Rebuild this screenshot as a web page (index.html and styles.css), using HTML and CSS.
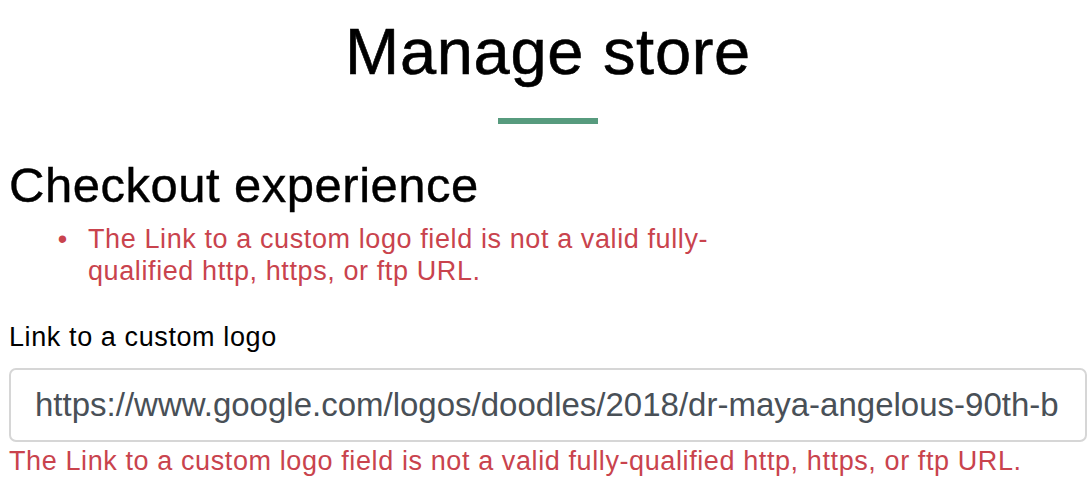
FILE: index.html
```html
<!DOCTYPE html>
<html lang="en">
<head>
<meta charset="utf-8">
<title>Manage store</title>
<link rel="stylesheet" href="styles.css">
</head>
<body>
<main class="page">
  <h1 class="title">Manage store</h1>
  <div class="divider"></div>
  <h2 class="section-title">Checkout experience</h2>
  <ul class="error-list">
    <li>The Link to a custom logo field is not a valid fully-qualified http, https, or ftp URL.</li>
  </ul>
  <form class="form">
    <label class="field-label" for="logo">Link to a custom logo</label>
    <input class="field-input" id="logo" type="text" value="https://www.google.com/logos/doodles/2018/dr-maya-angelous-90th-birthday-4873113640583168-2x.jpg">
    <div class="field-error">The Link to a custom logo field is not a valid fully-qualified http, https, or ftp URL.</div>
  </form>
</main>
</body>
</html>
```

FILE: styles.css
```css
* { box-sizing: border-box; }

html, body {
  margin: 0;
  background: #ffffff;
}

body {
  font-family: "Liberation Sans", Arial, Helvetica, sans-serif;
  font-size: 27px;
  letter-spacing: 0.6px;
  line-height: 1.5;
  color: #000000;
}

.page {
  width: 1078px;
  margin-left: 9px;
  display: flex;
  flex-direction: column;
}

.title {
  margin: 13px 0 0;
  font-size: 65px;
  font-weight: 400;
  letter-spacing: 0.7px;
  -webkit-text-stroke: 0.6px #000;
  line-height: 1.2;
  text-align: center;
}

.divider {
  width: 100px;
  height: 6px;
  background: #579b7e;
  margin: 27px auto 0;
}

.section-title {
  margin: 32px 0 0;
  font-size: 49px;
  font-weight: 400;
  letter-spacing: 0.5px;
  -webkit-text-stroke: 0.4px #000;
  line-height: 1.2;
}

.error-list {
  margin: 8px 0 0;
  padding-left: 79px;
  width: 720px;
  color: #c9434d;
  line-height: 32px;
}

.error-list li::marker {
  content: "\2022\2002\2009";
}

.form {
  display: flex;
  flex-direction: column;
  margin-top: 34px;
}

.field-label {
  line-height: 32px;
  margin-bottom: 15px;
}

.field-input {
  width: 100%;
  height: 74px;
  padding: 0 27px 0 24px;
  font-family: inherit;
  font-size: 33px;
  letter-spacing: 0;
  color: #495057;
  border: 2px solid #d6d6d6;
  border-radius: 7px;
  background: #fff;
  outline: none;
}

.field-error {
  color: #c9434d;
  line-height: 32px;
  margin-top: 3px;
}
```
